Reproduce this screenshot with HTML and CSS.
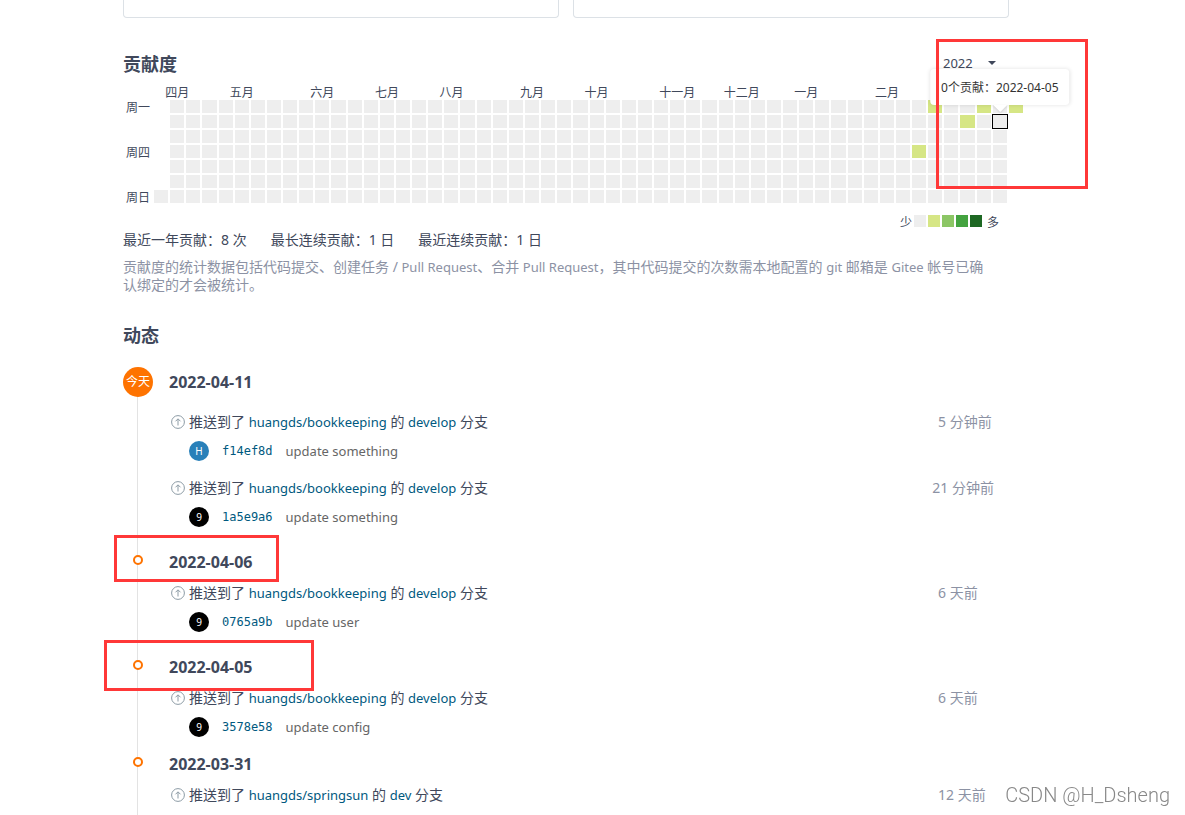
FILE: index.html
```html
<!DOCTYPE html>
<html lang="zh-CN">
<head>
    <meta charset="UTF-8">
    <meta name="viewport" content="width=device-width, initial-scale=1.0">
    <title>贡献度</title>
    <link rel="stylesheet" href="styles.css">
</head>
<body>
    <svg class="sprite" aria-hidden="true">
        <symbol id="push" viewBox="0 0 14 14">
            <circle cx="7" cy="7" r="6.4"/>
            <path d="M7 10.5V4M4.5 6.3L7 3.8l2.5 2.5"/>
        </symbol>
    </svg>

    <div class="projects">
        <div class="project"></div>
        <div class="project"></div>
    </div>

    <section class="contribution">
        <div class="mark mark-graph"></div>
        <header class="contribution-header">
            <h2>贡献度</h2>
            <div class="year">
                <select id="year" aria-label="年份">
                    <option>2022</option>
                </select>
                <svg class="caret" viewBox="0 0 8 4"><path d="M0 0h8L4 4z"/></svg>
            </div>
        </header>
        <div class="graph">
            <div class="months" id="months"></div>
            <div class="days">
                <span class="day-1">周一</span>
                <span class="day-4">周四</span>
                <span class="day-7">周日</span>
            </div>
            <div class="cells" id="cells"></div>
        </div>
        <div class="legend">
            <span class="less">少</span>
            <i class="level-0"></i>
            <i class="level-1"></i>
            <i class="level-2"></i>
            <i class="level-3"></i>
            <i class="level-4"></i>
            <span class="more">多</span>
        </div>
        <div class="stats">
            <span>最近一年贡献：8 次</span>
            <span>最长连续贡献：1 日</span>
            <span>最近连续贡献：1 日</span>
        </div>
        <p class="note">贡献度的统计数据包括代码提交、创建任务 / <span class="latin">Pull Request</span>、合并 <span class="latin">Pull Request</span>，其中代码提交的次数需本地配置的 <span class="latin">git</span> 邮箱是 <span class="latin">Gitee</span> 帐号已确认绑定的才会被统计。</p>
    </section>

    <section class="activity">
        <h2>动态</h2>
        <div class="timeline">
            <div class="group today">
                <div class="date"><span class="badge">今天</span><h3>2022-04-11</h3></div>
                <div class="event">
                    <div class="push">
                        <svg class="icon"><use href="#push"/></svg>
                        <span>推送到了 <a href="#">huangds/bookkeeping</a> 的 <a href="#">develop</a> 分支</span>
                        <time>5 分钟前</time>
                    </div>
                    <div class="commit"><span class="avatar blue">H</span><a class="sha" href="#">f14ef8d</a><span>update something</span></div>
                </div>
                <div class="event">
                    <div class="push">
                        <svg class="icon"><use href="#push"/></svg>
                        <span>推送到了 <a href="#">huangds/bookkeeping</a> 的 <a href="#">develop</a> 分支</span>
                        <time>21 分钟前</time>
                    </div>
                    <div class="commit"><span class="avatar">9</span><a class="sha" href="#">1a5e9a6</a><span>update something</span></div>
                </div>
            </div>
            <div class="group spaced">
                <div class="date"><div class="mark mark-first"></div><span class="dot"></span><h3>2022-04-06</h3></div>
                <div class="event">
                    <div class="push">
                        <svg class="icon"><use href="#push"/></svg>
                        <span>推送到了 <a href="#">huangds/bookkeeping</a> 的 <a href="#">develop</a> 分支</span>
                        <time>6 天前</time>
                    </div>
                    <div class="commit"><span class="avatar">9</span><a class="sha" href="#">0765a9b</a><span>update user</span></div>
                </div>
            </div>
            <div class="group spaced">
                <div class="date"><div class="mark mark-second"></div><span class="dot"></span><h3>2022-04-05</h3></div>
                <div class="event">
                    <div class="push">
                        <svg class="icon"><use href="#push"/></svg>
                        <span>推送到了 <a href="#">huangds/bookkeeping</a> 的 <a href="#">develop</a> 分支</span>
                        <time>6 天前</time>
                    </div>
                    <div class="commit"><span class="avatar">9</span><a class="sha" href="#">3578e58</a><span>update config</span></div>
                </div>
            </div>
            <div class="group">
                <div class="date"><span class="dot"></span><h3>2022-03-31</h3></div>
                <div class="push">
                    <svg class="icon"><use href="#push"/></svg>
                    <span>推送到了 <a href="#">huangds/springsun</a> 的 <a href="#">dev</a> 分支</span>
                    <time>12 天前</time>
                </div>
            </div>
        </div>
    </section>

    <div class="watermark">CSDN @H_Dsheng</div>

    <script>
        const WEEKS = 54;
        // month name -> week column
        const months = {
            "四月": 2, "五月": 6, "六月": 11, "七月": 15, "八月": 19, "九月": 24,
            "十月": 28, "十一月": 33, "十二月": 37, "一月": 41, "二月": 46
        };
        // "week-day" of the days with contributions
        const active = ["48-0", "51-0", "53-0", "50-1", "47-3"];
        const selected = "52-1";

        for (const name in months) {
            const label = document.createElement("span");
            label.textContent = name;
            label.style.gridColumn = months[name];
            document.getElementById("months").appendChild(label);
        }

        for (let week = 0; week < WEEKS; week++) {
            for (let day = 0; day < 7; day++) {
                const key = week + "-" + day;
                const cell = document.createElement("div");
                cell.className = active.includes(key) ? "level-1" : "level-0";
                if ((week === 0 && day < 6) || (week === WEEKS - 1 && day > 0)) {
                    cell.className = "empty";
                }
                if (key === selected) {
                    cell.className += " selected";
                    cell.innerHTML = '<div class="tooltip">0个贡献：2022-04-05</div>';
                }
                document.getElementById("cells").appendChild(cell);
            }
        }
    </script>
</body>
</html>
```
FILE: styles.css
```css
* {
    box-sizing: border-box;
}
body {
    margin: 0;
    padding: 0 176px 0 123px;
    min-height: 100vh;
    display: flex;
    flex-direction: column;
    font-family: "Noto Sans", "Noto Sans CJK SC", sans-serif;
    font-size: 13px;
    line-height: 20px;
    color: #40485b;
    background: #fff;
}
h2, h3, p {
    margin: 0;
}
h2 {
    font-size: 18px;
    line-height: 24px;
}
a {
    color: #005980;
    text-decoration: none;
}
a:hover {
    text-decoration: underline;
}
.sprite {
    position: absolute;
    width: 0;
    height: 0;
}
.projects {
    display: grid;
    grid-template-columns: 1fr 1fr;
    gap: 14px;
}
.project {
    height: 18px;
    border: 1px solid #dce1e6;
    border-top: none;
    border-radius: 0 0 4px 4px;
}

/* contribution graph */
.contribution {
    position: relative;
    margin-top: 34px;
}
.contribution-header {
    display: flex;
    justify-content: space-between;
    align-items: flex-start;
    height: 24px;
}
.year {
    position: relative;
    width: 66px;
}
.year select {
    appearance: none;
    display: block;
    width: 56px;
    padding: 0;
    border: none;
    background: none;
    color: inherit;
    font-family: inherit;
    font-size: 13px;
    line-height: 22px;
}
.caret {
    position: absolute;
    left: 45px;
    top: 9px;
    width: 8px;
    height: 4px;
    fill: #40485b;
    pointer-events: none;
}
.graph {
    display: grid;
    grid-template-columns: 31px 1fr;
    margin: 8px -14px 0 0;
    font-size: 12px;
}
.months, .cells {
    display: grid;
    grid-template-columns: repeat(54, minmax(0, 1fr));
    column-gap: 2px;
}
.months {
    grid-column: 2;
    height: 16px;
    line-height: 18px;
}
.months span {
    justify-self: center;
    white-space: nowrap;
}
.days, .cells {
    grid-template-rows: repeat(7, 13px);
    row-gap: 2px;
}
.days {
    display: grid;
    padding-left: 3px;
    line-height: 15px;
}
.day-1 {
    grid-row: 1;
}
.day-4 {
    grid-row: 4;
}
.day-7 {
    grid-row: 7;
}
.cells {
    grid-auto-flow: column;
}
.level-0 {
    background: #eee;
}
.level-1 {
    background: #d6e685;
}
.level-2 {
    background: #8cc665;
}
.level-3 {
    background: #44a340;
}
.level-4 {
    background: #1e6823;
}
.selected {
    position: relative;
    outline: 1px solid #000;
}
.tooltip {
    position: absolute;
    bottom: 23px;
    left: 50%;
    transform: translateX(-50%);
    padding: 9px 11px 7px;
    border-radius: 4px;
    background: #fff;
    box-shadow: 0 0 4px rgba(0, 0, 0, 0.12);
    color: #333;
    white-space: nowrap;
}
.tooltip::after {
    content: "";
    position: absolute;
    top: 100%;
    left: 50%;
    margin-left: -7px;
    border: 7px solid transparent;
    border-top-color: #fff;
    border-bottom: none;
    filter: drop-shadow(0 1px 1px rgba(0, 0, 0, 0.12));
}
.legend {
    display: flex;
    justify-content: flex-end;
    align-items: center;
    gap: 2px;
    margin-top: 8px;
    padding-right: 10px;
    font-size: 12px;
}
.legend span {
    padding-top: 4px;
    line-height: 16px;
}
.legend i {
    width: 12px;
    height: 12px;
}
.legend .more {
    margin-left: 3px;
}
.stats {
    display: flex;
    gap: 24px;
    font-size: 14px;
    line-height: 18px;
}
.note {
    margin-top: 9px;
    padding-right: 20px;
    color: #8c92a4;
    font-size: 14px;
    line-height: 18px;
}
.latin {
    font-size: 13px;
}

/* activity timeline */
.activity {
    flex: 1;
    display: flex;
    flex-direction: column;
    margin-top: 29px;
}
.timeline {
    flex: 1;
    margin-top: 25px;
    background: linear-gradient(#e3e3e3, #e3e3e3) 14px 0 / 1px 100% no-repeat;
}
.date {
    position: relative;
    display: grid;
    grid-template-columns: 30px 1fr;
    grid-template-rows: 20px;
    column-gap: 16px;
    align-items: center;
    height: 20px;
    margin-bottom: 11px;
}
.today .date {
    margin-bottom: 20px;
}
.spaced {
    padding-top: 8px;
}
h3 {
    font-size: 16px;
    line-height: 20px;
}
.badge {
    height: 30px;
    border-radius: 50%;
    background: #fe7300;
    color: #fff;
    font-size: 12px;
    line-height: 30px;
    text-align: center;
}
.dot {
    justify-self: center;
    width: 10px;
    height: 10px;
    margin-bottom: 4px;
    border: 2px solid #fe7300;
    border-radius: 50%;
    background: #fff;
}
.event {
    padding-bottom: 17px;
}
.push {
    display: flex;
    align-items: center;
    gap: 4px;
    padding: 0 15px 0 48px;
    font-size: 14px;
}
.push a {
    font-size: 13px;
}
.push time {
    min-width: 56px;
    margin-left: auto;
    color: #8c92a4;
}
.icon {
    width: 14px;
    height: 14px;
    fill: none;
    stroke: #8c9ba5;
}
.commit {
    display: flex;
    align-items: center;
    gap: 13px;
    margin-top: 9px;
    padding-left: 66px;
    color: #666;
}
.avatar {
    width: 20px;
    height: 20px;
    border-radius: 50%;
    background: #000;
    color: #fff;
    font-size: 10px;
    text-align: center;
}
.blue {
    background: #2980b9;
}
.sha {
    font-family: "DejaVu Sans Mono", monospace;
    font-size: 12px;
}

/* red highlight frames */
.mark {
    position: absolute;
    z-index: 2;
    border: 3px solid #ff3838;
    pointer-events: none;
}
.mark-graph {
    top: -13px;
    right: -79px;
    width: 152px;
    height: 150px;
}
.mark-first {
    top: -17px;
    left: -9px;
    width: 165px;
    height: 47px;
}
.mark-second {
    top: -17px;
    left: -19px;
    width: 210px;
    height: 51px;
}
.watermark {
    position: fixed;
    right: 15px;
    bottom: 8px;
    color: #888;
    font-family: Roboto, sans-serif;
    font-size: 20px;
    font-weight: 300;
    line-height: 24px;
}
```
